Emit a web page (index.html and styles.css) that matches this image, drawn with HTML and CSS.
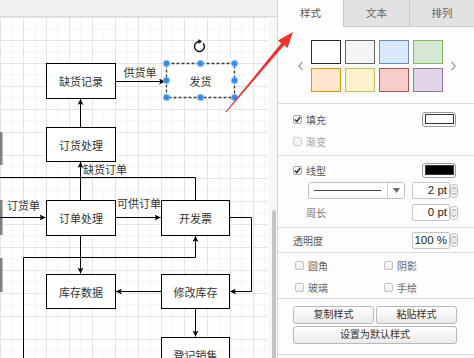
FILE: index.html
```html
<!DOCTYPE html>
<html>
<head>
<meta charset="utf-8">
<link rel="stylesheet" href="styles.css">
</head>
<body>
<div class="app">
  <div class="editor">
    <div class="strip"></div>
    <div class="work">
      <div class="canvas">
        <svg class="diagram" width="268" height="341" viewBox="0 17 268 341">
          <defs>
            <marker id="ah" viewBox="0 0 8 8" refX="8" refY="4" markerWidth="6" markerHeight="6" orient="auto">
              <path d="M0,0 L8,4 L0,8 L2,4 Z" fill="#000"/>
            </marker>
          </defs>
          <g class="stubs">
            <rect x="0" y="132" width="2.5" height="33"/>
            <rect x="0" y="200" width="2.5" height="35"/>
            <rect x="0" y="258" width="2.5" height="34"/>
          </g>
          <g class="edges">
            <path d="M115.5 81.5 H165" marker-end="url(#ah)"/>
            <path d="M80.5 127 V99" marker-end="url(#ah)"/>
            <path d="M80.5 200 V162" marker-end="url(#ah)"/>
            <path d="M0 217.5 H45.5" marker-end="url(#ah)"/>
            <path d="M115.5 217.5 H160.5" marker-end="url(#ah)"/>
            <path d="M195.5 200 V177.5 H0"/>
            <path d="M229 217.5 H251.5 V291.5 H230" marker-end="url(#ah)"/>
            <path d="M80.5 235 V273.5" marker-end="url(#ah)"/>
            <path d="M161 291.5 H116" marker-end="url(#ah)"/>
            <path d="M23.5 360 V257.5 H195.5 V236" marker-end="url(#ah)"/>
            <path d="M195.5 308 V336.5" marker-end="url(#ah)"/>
          </g>
          <g class="nodes">
            <rect x="46.5" y="63.5" width="69" height="35"/>
            <rect x="46.5" y="127.5" width="69" height="34"/>
            <rect x="46.5" y="200.5" width="69" height="35"/>
            <rect x="161.5" y="200.5" width="68" height="35"/>
            <rect x="46.5" y="274.5" width="69" height="34"/>
            <rect x="161.5" y="274.5" width="68" height="34"/>
            <rect x="161.5" y="337.5" width="68" height="34"/>
            <rect class="sel" x="166.5" y="63.5" width="68" height="34"/>
          </g>
          <g class="labels">
            <text x="81" y="81">缺货记录</text>
            <text x="200.5" y="80.5">发货</text>
            <text x="81" y="144.5">订货处理</text>
            <text x="81" y="218">订单处理</text>
            <text x="195.5" y="218">开发票</text>
            <text x="81" y="291.5">库存数据</text>
            <text x="195.5" y="291.5">修改库存</text>
            <text x="195.5" y="354.5">登记销售</text>
            <text x="140" y="72">供货单</text>
            <text x="105" y="169">缺货订单</text>
            <text x="23.5" y="205">订货单</text>
            <text x="139" y="203">可供订单</text>
          </g>
          <g class="handles">
            <circle cx="166.5" cy="63.5" r="3"/>
            <circle cx="200.5" cy="63.5" r="3"/>
            <circle cx="234.5" cy="63.5" r="3"/>
            <circle cx="166.5" cy="80.5" r="3"/>
            <circle cx="234.5" cy="80.5" r="3"/>
            <circle cx="166.5" cy="97.5" r="3"/>
            <circle cx="200.5" cy="97.5" r="3"/>
            <circle cx="234.5" cy="97.5" r="3"/>
          </g>
          <g class="rotate">
            <path d="M199.5 41.5 A5 5 0 1 0 203.2 43.2" fill="none" stroke="#111" stroke-width="1.4"/>
            <path d="M202 41.5 L198.5 39 L198.5 44 Z" fill="#111"/>
          </g>
        </svg>
      </div>
      <div class="vscroll"><div class="thumb"></div></div>
    </div>
  </div>

  <div class="panel">
    <div class="tabs">
      <div class="tab active">样式</div>
      <div class="tab">文本</div>
      <div class="tab last">排列</div>
    </div>

    <div class="section swatches">
      <svg class="chev" width="7" height="12" viewBox="0 0 7 12"><path d="M5.5 2 L1.8 6 L5.5 10" fill="none" stroke="#aaa" stroke-width="1.6"/></svg>
      <div class="swatch-grid">
        <span class="sw s1"></span>
        <span class="sw s2"></span>
        <span class="sw s3"></span>
        <span class="sw s4"></span>
        <span class="sw s5"></span>
        <span class="sw s6"></span>
        <span class="sw s7"></span>
        <span class="sw s8"></span>
      </div>
      <svg class="chev" width="7" height="12" viewBox="0 0 7 12"><path d="M1.5 2 L5.2 6 L1.5 10" fill="none" stroke="#aaa" stroke-width="1.6"/></svg>
    </div>

    <div class="section fill">
      <div class="row">
        <span class="cb"><span class="box"><svg width="7" height="7" viewBox="0 0 7 7"><path d="M1 3.6 L2.8 5.6 L6.2 1" fill="none" stroke="#333" stroke-width="1.5"/></svg></span>填充</span>
        <span class="color"><span class="inner white"></span></span>
      </div>
      <div class="row gap4">
        <span class="cb off"><span class="box"></span>渐变</span>
      </div>
    </div>

    <div class="section line">
      <div class="row r16">
        <span class="cb"><span class="box"><svg width="7" height="7" viewBox="0 0 7 7"><path d="M1 3.6 L2.8 5.6 L6.2 1" fill="none" stroke="#333" stroke-width="1.5"/></svg></span>线型</span>
        <span class="color"><span class="inner black"></span></span>
      </div>
      <div class="row r17 gap4">
        <span class="dropdown"><span class="stroke"><span class="rule"></span></span><span class="caret"><svg width="7" height="5" viewBox="0 0 7 5"><path d="M0 0 H7 L3.5 5 Z" fill="#666"/></svg></span></span>
        <span class="num"><span class="field">2 pt</span><svg class="spin" width="8" height="14" viewBox="0 0 8 14"><rect x="0.5" y="0.5" width="7" height="13" rx="3" fill="#f6f6f6" stroke="#bbb"/><path d="M2 5.2 L4 3.2 L6 5.2 M2 8.8 L4 10.8 L6 8.8" fill="none" stroke="#777" stroke-width="0.9"/><path d="M1 7 H7" stroke="#ccc" stroke-width="0.8"/></svg></span>
      </div>
      <div class="row r17 gap5">
        <span class="lbl indent">周长</span>
        <span class="num"><span class="field">0 pt</span><svg class="spin" width="8" height="14" viewBox="0 0 8 14"><rect x="0.5" y="0.5" width="7" height="13" rx="3" fill="#f6f6f6" stroke="#bbb"/><path d="M2 5.2 L4 3.2 L6 5.2 M2 8.8 L4 10.8 L6 8.8" fill="none" stroke="#777" stroke-width="0.9"/><path d="M1 7 H7" stroke="#ccc" stroke-width="0.8"/></svg></span>
      </div>
    </div>

    <div class="section opacity">
      <span class="lbl">透明度</span>
      <span class="num"><span class="field">100 %</span><svg class="spin" width="8" height="14" viewBox="0 0 8 14"><rect x="0.5" y="0.5" width="7" height="13" rx="3" fill="#f6f6f6" stroke="#bbb"/><path d="M2 5.2 L4 3.2 L6 5.2 M2 8.8 L4 10.8 L6 8.8" fill="none" stroke="#777" stroke-width="0.9"/><path d="M1 7 H7" stroke="#ccc" stroke-width="0.8"/></svg></span>
    </div>

    <div class="section checks">
      <span class="cb soft"><span class="box"></span>圆角</span>
      <span class="cb soft"><span class="box"></span>阴影</span>
      <span class="cb soft"><span class="box"></span>玻璃</span>
      <span class="cb soft"><span class="box"></span>手绘</span>
    </div>

    <div class="section buttons">
      <div class="btn-row">
        <button class="btn">复制样式</button>
        <button class="btn">粘贴样式</button>
      </div>
      <button class="btn wide">设置为默认样式</button>
    </div>
  </div>

  <svg class="pointer" width="474" height="358" viewBox="0 0 474 358">
    <polygon points="225.6,111.7 281.2,43.3 277.9,40.5 293,32 287.5,48.1 284.1,45.3 226.4,112.3" fill="#e8352e"/>
  </svg>
</div>
</body>
</html>
```

FILE: styles.css
```css
* { box-sizing: border-box; }
html, body { margin: 0; padding: 0; }
body {
  width: 474px;
  height: 358px;
  overflow: hidden;
  background: #fff;
  font-family: "Liberation Sans", "Noto Sans CJK SC", sans-serif;
}
.app {
  position: relative;
  display: flex;
  width: 474px;
  height: 358px;
}

/* editor / canvas */
.editor {
  width: 277px;
  display: flex;
  flex-direction: column;
}
.strip {
  height: 17px;
  background: #efefef;
  border-bottom: 1px solid #dadada;
}
.work {
  flex: 1;
  display: flex;
  min-height: 0;
}
.canvas {
  width: 268px;
  overflow: hidden;
  background-color: #fff;
  background-image:
    linear-gradient(#e4e4e4 1px, transparent 1px),
    linear-gradient(90deg, #e4e4e4 1px, transparent 1px),
    linear-gradient(#f3f3f3 1px, transparent 1px),
    linear-gradient(90deg, #f3f3f3 1px, transparent 1px);
  background-size: 23px 23px, 23px 23px, 11.5px 11.5px, 11.5px 11.5px;
}
.diagram { display: block; }
.diagram .stubs rect { fill: #808080; }
.diagram .edges path { fill: none; stroke: #000; stroke-width: 1; }
.diagram .nodes rect { fill: #fff; stroke: #000; stroke-width: 1; }
.diagram .nodes rect.sel { stroke: #3a3a3a; stroke-dasharray: 3 2; stroke-width: 1.3; }
.diagram .labels text {
  font-family: "Noto Sans CJK SC", sans-serif;
  font-size: 11px;
  fill: #333;
  text-anchor: middle;
  dominant-baseline: central;
}
.diagram .handles circle {
  fill: #2f8be6;
  stroke: rgba(120, 180, 245, 0.55);
  stroke-width: 1.5;
}
.vscroll {
  width: 9px;
  background: #f8f8f8;
  display: flex;
  flex-direction: column;
  padding: 193px 1px 0 4px;
}
.thumb {
  flex: 1;
  background: #c4c4c4;
  border-radius: 2px 2px 0 0;
}

.pointer {
  position: absolute;
  left: 0;
  top: 0;
  pointer-events: none;
}

/* panel */
.panel {
  width: 197px;
  border-left: 1px solid #d6d6d6;
  background: #fdfdfd;
  display: flex;
  flex-direction: column;
  font-size: 10px;
  color: #555;
}
.tabs {
  display: flex;
  height: 27px;
}
.tab {
  width: 66px;
  line-height: 26px;
  text-align: center;
  font-size: 10.5px;
  color: #666;
  background: #e2e2e2;
  border-left: 1px solid #c9c9c9;
  border-bottom: 1px solid #c9c9c9;
}
.tab.active {
  width: 65px;
  background: #fdfdfd;
  border-left: none;
  border-bottom: none;
  color: #555;
}
.tab.last { width: 65px; }

.section { border-bottom: 1px solid #dcdcdc; }

.swatches {
  display: flex;
  justify-content: center;
  align-items: center;
  gap: 7px;
  padding: 13px 0 11px 2px;
}
.chev { display: block; }
.swatch-grid {
  display: grid;
  grid-template-columns: repeat(4, 30px);
  grid-auto-rows: 24px;
  column-gap: 4px;
  row-gap: 4px;
}
.sw { display: block; border: 1px solid; }
.s1 { background: #fff; border-color: #2a2a2a; }
.s2 { background: #f5f5f5; border-color: #666; }
.s3 { background: #dae8fc; border-color: #6c8ebf; }
.s4 { background: #d5e8d4; border-color: #82b366; }
.s5 { background: #ffe6cc; border-color: #d79b00; }
.s6 { background: #fff2cc; border-color: #d6b656; }
.s7 { background: #f8cecc; border-color: #b85450; }
.s8 { background: #e1d5e7; border-color: #9673a6; }

.row {
  display: flex;
  align-items: center;
  justify-content: space-between;
  height: 18px;
}
.row.r16 { height: 16px; }
.row.r17 { height: 17px; }
.gap4 { margin-top: 4px; }
.gap5 { margin-top: 5px; }

.fill { padding: 6px 16px 5px 15px; }
.line { padding: 6px 16px 6px 15px; }

.cb {
  display: flex;
  align-items: center;
  gap: 4px;
  color: #555;
}
.cb .box {
  width: 9px;
  height: 9px;
  border: 1px solid #a9a9a9;
  border-radius: 2px;
  background: linear-gradient(#fff, #e9e9e9);
  display: flex;
  align-items: center;
  justify-content: center;
}
.cb .box svg { display: block; }
.cb.off { color: #a5a5a5; }
.cb.off .box { border-color: #cfcfcf; background: #f4f4f4; }
.cb.soft { color: #666; }
.cb.soft .box { border-color: #c2c2c2; background: linear-gradient(#fafafa, #ececec); }

.color {
  width: 34px;
  height: 15px;
  margin-right: 2px;
  border: 1px solid #9a9a9a;
  border-radius: 3px;
  padding: 1.5px;
  background: #fff;
}
.color .inner {
  display: block;
  height: 100%;
  border: 1px solid #333;
}
.color .inner.white { background: #fff; }
.color .inner.black { background: #000; }

.dropdown {
  margin-left: 15px;
  width: 97px;
  height: 17px;
  border: 1px solid #bdbdbd;
  border-radius: 3px;
  background: #fff;
  display: flex;
}
.dropdown .stroke {
  flex: 1;
  display: flex;
  align-items: center;
  padding: 0 6px 0 5px;
}
.dropdown .rule {
  flex: 1;
  height: 1px;
  background: #444;
}
.dropdown .caret {
  width: 17px;
  border-left: 1px solid #d0d0d0;
  display: flex;
  align-items: center;
  justify-content: center;
}
.dropdown .caret svg { display: block; }

.num {
  display: flex;
  align-items: center;
  height: 17px;
}
.num .field {
  width: 38px;
  height: 17px;
  border: 1px solid #c4c4c4;
  border-radius: 2px;
  background: #fff;
  font-size: 11.5px;
  line-height: 15px;
  color: #222;
  text-align: right;
  padding-right: 2px;
}
.num .spin { display: block; }

.lbl { color: #555; }
.lbl.indent { margin-left: 13px; color: #777; }

.opacity {
  height: 25px;
  padding: 0 16px 0 15px;
  display: flex;
  align-items: center;
  justify-content: space-between;
}

.checks {
  height: 46px;
  padding: 4px 0 0 17px;
  display: grid;
  grid-template-columns: 89px 1fr;
  grid-auto-rows: 16px;
  row-gap: 6px;
}

.buttons {
  height: 56px;
  padding: 7px 17px 0 15px;
  display: flex;
  flex-direction: column;
  gap: 2px;
}
.btn-row {
  display: flex;
  gap: 2px;
}
.btn {
  flex: 1;
  height: 18px;
  margin: 0;
  padding: 0;
  border: 1px solid #b8b8b8;
  border-radius: 3px;
  background: linear-gradient(#ffffff, #eaeaea);
  font-family: "Liberation Sans", "Noto Sans CJK SC", sans-serif;
  font-size: 10px;
  color: #333;
  line-height: 16px;
}
.btn.wide { flex: none; width: 100%; }
```
